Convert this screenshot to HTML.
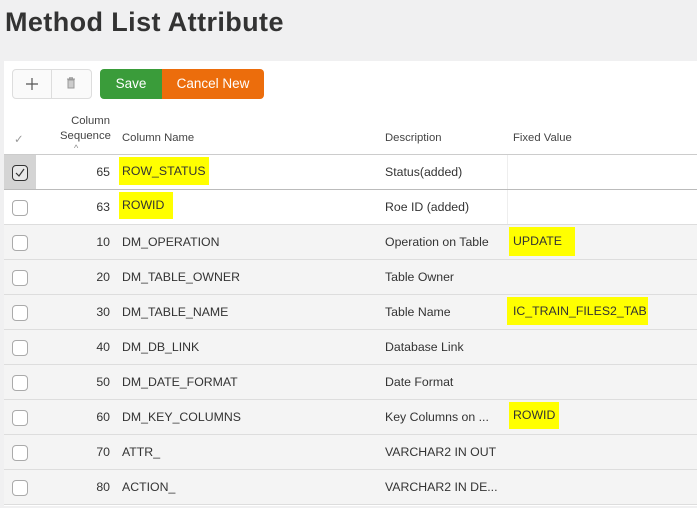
<!DOCTYPE html>
<html><head><style>
*{margin:0;padding:0;box-sizing:border-box}
body{width:697px;height:508px;background:#f0f0f1;font-family:"Liberation Sans",sans-serif;position:relative;overflow:hidden;color:#333}
.t{position:absolute;left:5px;top:7px;font-size:27px;font-weight:bold;color:#333;letter-spacing:0.4px}
.panel{position:absolute;left:4px;top:61px;width:693px;height:445px;background:#fff}
.tb{position:absolute;left:8px;top:8px;width:80px;height:30px;border:1px solid #ddd;border-radius:4px;background:#fafafa}
.tb .d{position:absolute;left:38px;top:0;width:1px;height:28px;background:#ddd}
.save{position:absolute;left:96px;top:8px;width:62px;height:30px;background:#3a9c3a;color:#fff;font-size:13.5px;line-height:30px;text-align:center;border-radius:4px 0 0 4px}
.cancel{position:absolute;left:158px;top:8px;width:102px;height:30px;background:#ec6d0c;color:#fff;font-size:13.5px;line-height:30px;text-align:center;border-radius:0 4px 4px 0}
.h{position:absolute;font-size:11.3px;color:#444}
.row{position:absolute;left:0;width:693px;height:35px;border-bottom:1px solid #ddd;font-size:12.3px;color:#333}
.row span{position:absolute;top:0;line-height:34px;white-space:nowrap}
.cb{position:absolute;left:8px;top:10px;width:16px;height:16px;border:1px solid #aaa;border-radius:4px;background:#fff}
.y{background:#ffff00;}
</style></head><body>
<div class="t">Method List Attribute</div>
<div class="panel">
<div class="tb"><div class="d"></div>
<svg style="position:absolute;left:13px;top:8px" width="12" height="12"><path d="M6 0V12M0 6H12" stroke="#555" stroke-width="1.2"/></svg>
<svg style="position:absolute;left:53px;top:7px" width="10" height="12"><path d="M1 2H9M3.5 2V0.8H6.5V2M2 3H8V11H2Z" stroke="#999" fill="#ccc" stroke-width="1"/></svg>
</div>
<div class="save">Save</div><div class="cancel">Cancel New</div>
<div class="h" style="left:10px;top:72px;color:#999">✓</div>
<div class="h" style="left:56px;top:53px;width:50px;text-align:right;line-height:15px">Column<br>Sequence</div>
<div class="h" style="left:70px;top:82px;font-size:9px;color:#888">^</div>
<div class="h" style="left:118px;top:71px">Column Name</div>
<div class="h" style="left:381px;top:71px">Description</div>
<div class="h" style="left:509px;top:71px">Fixed Value</div>
<div style="position:absolute;left:0;top:93px;width:693px;height:1px;background:#ccc"></div>
</div>
<div style="position:absolute;left:4px;top:155px">
<div class="row" style="top:0;background:#fff;border-bottom-color:#bbb"><div style="position:absolute;left:0;top:0;width:32px;height:34px;background:#d4d4d4"></div><div class="cb" style="border-color:#333;background:#e8e8e8"><svg width="14" height="14" style="position:absolute;left:0;top:0"><path d="M3 7L6 10L11 3" stroke="#333" fill="none" stroke-width="1.2"/></svg></div><span style="left:60px;width:46px;text-align:right">65</span><span class="y" style="left:115px;top:2px;height:28px;line-height:28px;width:90px;padding-left:3px">ROW_STATUS</span><span style="left:381px">Status(added)</span><div style="position:absolute;left:503px;top:0;width:1px;height:34px;background:#eee"></div></div>
<div class="row" style="top:35px;background:#fff"><div class="cb"></div><span style="left:60px;width:46px;text-align:right">63</span><span class="y" style="left:115px;top:2px;height:27px;line-height:27px;width:54px;padding-left:3px">ROWID</span><span style="left:381px">Roe ID (added)</span><div style="position:absolute;left:503px;top:0;width:1px;height:34px;background:#eee"></div></div>
<div class="row" style="top:70px;background:#f4f4f4"><div class="cb"></div><span style="left:60px;width:46px;text-align:right">10</span><span style="left:118px">DM_OPERATION</span><span style="left:381px">Operation on Table</span><span class="y" style="left:505px;top:2px;height:29px;line-height:29px;width:66px;padding-left:4px">UPDATE</span></div>
<div class="row" style="top:105px;background:#f4f4f4"><div class="cb"></div><span style="left:60px;width:46px;text-align:right">20</span><span style="left:118px">DM_TABLE_OWNER</span><span style="left:381px">Table Owner</span></div>
<div class="row" style="top:140px;background:#f4f4f4"><div class="cb"></div><span style="left:60px;width:46px;text-align:right">30</span><span style="left:118px">DM_TABLE_NAME</span><span style="left:381px">Table Name</span><span class="y" style="left:503px;top:2px;height:28px;line-height:28px;width:141px;padding-left:6px">IC_TRAIN_FILES2_TAB</span></div>
<div class="row" style="top:175px;background:#f4f4f4"><div class="cb"></div><span style="left:60px;width:46px;text-align:right">40</span><span style="left:118px">DM_DB_LINK</span><span style="left:381px">Database Link</span></div>
<div class="row" style="top:210px;background:#f4f4f4"><div class="cb"></div><span style="left:60px;width:46px;text-align:right">50</span><span style="left:118px">DM_DATE_FORMAT</span><span style="left:381px">Date Format</span></div>
<div class="row" style="top:245px;background:#f4f4f4"><div class="cb"></div><span style="left:60px;width:46px;text-align:right">60</span><span style="left:118px">DM_KEY_COLUMNS</span><span style="left:381px">Key Columns on ...</span><span class="y" style="left:505px;top:2px;height:27px;line-height:27px;width:50px;padding-left:4px">ROWID</span></div>
<div class="row" style="top:280px;background:#f4f4f4"><div class="cb"></div><span style="left:60px;width:46px;text-align:right">70</span><span style="left:118px">ATTR_</span><span style="left:381px">VARCHAR2 IN OUT</span></div>
<div class="row" style="top:315px;background:#f4f4f4"><div class="cb"></div><span style="left:60px;width:46px;text-align:right">80</span><span style="left:118px">ACTION_</span><span style="left:381px">VARCHAR2 IN DE...</span></div>
</div>
</body></html>
